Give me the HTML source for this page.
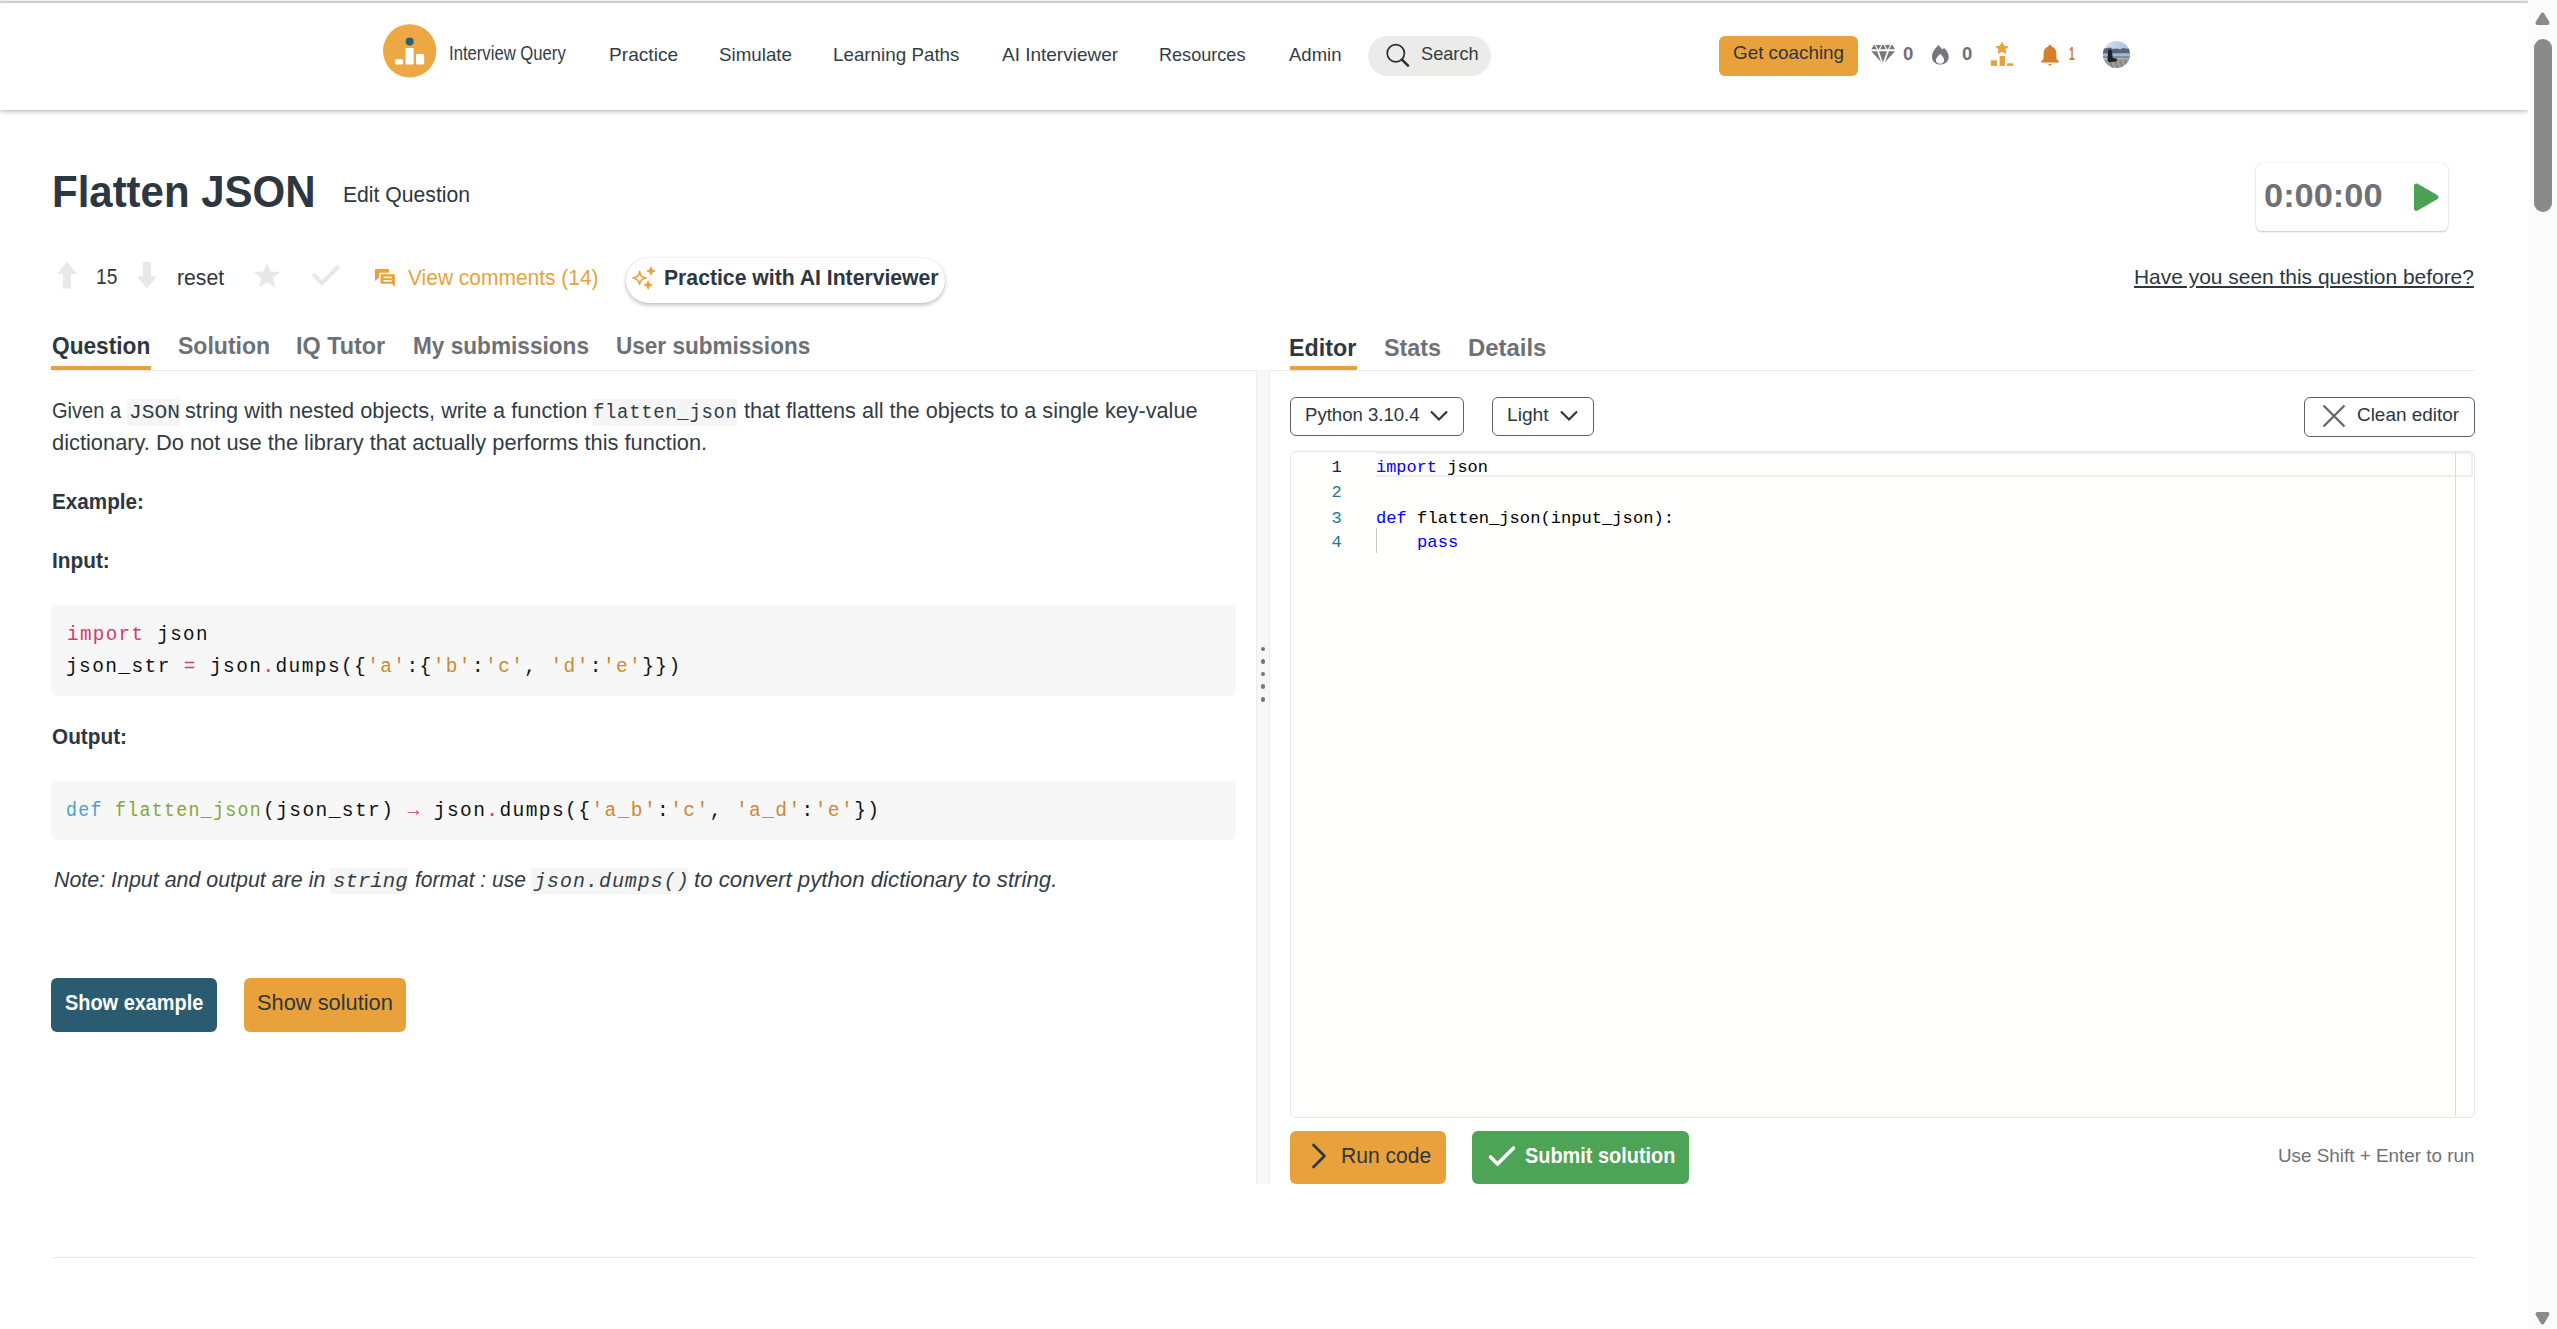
<!DOCTYPE html><html><head><meta charset="utf-8"><style>html,body{margin:0;padding:0;}body{width:2557px;height:1329px;overflow:hidden;position:relative;background:#fff;}.t{position:absolute;white-space:nowrap;transform-origin:0 0;}</style></head><body>
<div style="position:absolute;left:0px;top:0px;width:2528px;height:1px;background:#f4f2f4;border-radius:0px;"></div>
<div style="position:absolute;left:0px;top:1px;width:2528px;height:2px;background:#e1dfe1;border-radius:0px;"></div>
<div style="position:absolute;left:0;top:3px;width:2528px;height:107px;background:#fff;box-shadow:0 1px 5px rgba(0,0,0,0.33);"></div>
<svg style="position:absolute;left:383px;top:24px" width="54" height="54" viewBox="0 0 54 54">
<circle cx="26.7" cy="26.9" r="26.7" fill="#eba845"/>
<circle cx="26.7" cy="17.6" r="4" fill="#2b5f7e"/>
<rect x="12" y="35.2" width="8" height="5.3" rx="1.2" fill="#fff"/>
<rect x="22.6" y="24.1" width="8" height="16.4" rx="1.2" fill="#fff"/>
<rect x="33" y="29.9" width="8.2" height="10.6" rx="1.2" fill="#fff"/>
</svg>
<div style="position:absolute;left:1368px;top:36px;width:123px;height:40px;background:#ebebea;border-radius:20px;"></div>
<svg style="position:absolute;left:1384px;top:41px" width="28" height="28" viewBox="0 0 28 28">
<circle cx="11.8" cy="12.2" r="8.6" fill="none" stroke="#2b2f33" stroke-width="1.7"/>
<line x1="18" y1="18.6" x2="24" y2="24.6" stroke="#2b2f33" stroke-width="2.6" stroke-linecap="round"/>
</svg>
<div style="position:absolute;left:1719px;top:36px;width:139px;height:40px;background:#e9a23b;border-radius:6px;"></div>
<svg style="position:absolute;left:1870px;top:44px" width="27" height="21" viewBox="0 0 27 21">
<path d="M1.3 5.3 L3.9 1 L22.4 1 L25 5.3 Z" fill="#77777c"/>
<path d="M1.3 7.2 L25 7.2 L13 20.2 Z" fill="#77777c"/>
<path d="M5 0.6 L7.6 5.5 M11.9 0.6 L9.4 5.5 M14.1 0.6 L16.6 5.5 M21 0.6 L18.4 5.5" stroke="#fff" stroke-width="1.2"/>
<path d="M7.9 7 L12.6 19.8 M18.1 7 L13.4 19.8" stroke="#fff" stroke-width="1.8"/>
</svg>
<svg style="position:absolute;left:1931px;top:44px" width="20" height="22" viewBox="0 0 20 22">
<path d="M9.3 20.6 C4.5 20.6 1 17.4 1 12.8 C1 8 4.5 4.2 7.6 1 C8.9 2.3 10.2 3.9 11.2 5.5 C11.8 4.9 12.4 4.4 13 4 C15.8 6.2 17.7 9.4 17.7 13 C17.7 17.4 14.2 20.6 9.3 20.6 Z" fill="#76777c"/>
<path d="M9.3 9.8 C11.3 12 13.1 14 13.1 16.3 C13.1 18.5 11.5 19.7 9.3 19.7 C7.1 19.7 4.9 18.5 4.9 16.3 C4.9 14 7.3 12 9.3 9.8 Z" fill="#fff"/>
</svg>
<svg style="position:absolute;left:1990px;top:41px" width="25" height="26" viewBox="0 0 25 26">
<path d="M12 1.3 L13.9 5.2 L18 5.6 L14.9 8.4 L15.8 12.4 L12 10.3 L8.2 12.4 L9.1 8.4 L6 5.6 L10.1 5.2 Z" fill="#e9a23b" stroke="#e9a23b" stroke-width="1" stroke-linejoin="round"/>
<rect x="0.8" y="19.3" width="6.2" height="5.6" fill="#e9a23b"/>
<rect x="9.6" y="15" width="5.4" height="10" fill="#e9a23b"/>
<rect x="16.8" y="22.3" width="6.2" height="2.6" fill="#e9a23b"/>
</svg>
<svg style="position:absolute;left:2040px;top:44px" width="20" height="23" viewBox="0 0 20 23">
<path d="M10 0.8 C11 0.8 11.6 1.6 11.6 2.4 C14.8 3.3 16.4 6 16.4 9.6 L16.4 14.6 L18.8 17.6 C19.2 18.1 18.9 18.6 18.3 18.6 L1.7 18.6 C1.1 18.6 0.8 18.1 1.2 17.6 L3.6 14.6 L3.6 9.6 C3.6 6 5.2 3.3 8.4 2.4 C8.4 1.6 9 0.8 10 0.8 Z" fill="#d67f2a"/>
<path d="M8 20 L12 20 L10 22 Z" fill="#d67f2a"/>
</svg>
<svg style="position:absolute;left:2102px;top:40px" width="29" height="29" viewBox="0 0 29 29">
<defs><clipPath id="av"><circle cx="14.4" cy="14.4" r="13.5"/></clipPath>
<linearGradient id="sky" x1="0" y1="0" x2="1" y2="0.6"><stop offset="0" stop-color="#dfe8f0"/><stop offset="1" stop-color="#8fb5e0"/></linearGradient></defs>
<g clip-path="url(#av)">
<rect x="0" y="0" width="29" height="29" fill="url(#sky)"/>
<path d="M0 9 L5 8 L8 7.5 L11 9 L15 8.5 L18 9.5 L21 8 L25 8.8 L29 8.5 L29 13.5 L0 14 Z" fill="#56657a"/>
<rect x="0" y="13.5" width="29" height="6" fill="#a9b7c4"/>
<rect x="0" y="16" width="29" height="2" fill="#7f8e9c"/>
<path d="M0 20 L29 18.5 L29 29 L0 29 Z" fill="#9d9a94"/>
<path d="M3 22 L6 29 M8 21 L11 29 M13 21 L16 29 M18 20.5 L21 29 M23 20 L26 29" stroke="#6f6c68" stroke-width="0.8"/>
<path d="M6 12 C6 9 8.5 8.3 9.6 10.5 C10.6 12.5 10.2 16 10.8 18 L14.6 18.6 C15.6 19.2 15 21.4 13.6 21.6 L7.6 22.2 C5.8 22.2 5.2 20.6 5.6 18.6 Z" fill="#1d2229"/>
</g></svg>
<div style="position:absolute;left:2528px;top:0px;width:29px;height:1329px;background:#fbfbfb;border-radius:0px;"></div>
<svg style="position:absolute;left:2528px;top:0" width="29" height="1329" viewBox="0 0 29 1329">
<path d="M14.6 12.4 C15.3 12.4 15.8 12.8 16.2 13.4 L21.2 21.8 C21.8 22.8 21.3 25 19.8 25 L9.2 25 C7.8 25 7.2 22.9 7.8 21.8 L12.9 13.4 C13.3 12.8 13.9 12.4 14.6 12.4 Z" fill="#8a8a8a"/>
<rect x="6" y="39" width="18" height="173" rx="9" fill="#8a8a8a"/>
<path d="M14.6 1324.5 C15.3 1324.5 15.8 1324.1 16.2 1323.5 L21.2 1315.1 C21.8 1314.1 21.3 1311.9 19.8 1311.9 L9.2 1311.9 C7.8 1311.9 7.2 1314 7.8 1315.1 L12.9 1323.5 C13.3 1324.1 13.9 1324.5 14.6 1324.5 Z" fill="#8a8a8a"/>
</svg>
<div style="position:absolute;left:2256px;top:163px;width:192px;height:68px;background:#fff;border-radius:6px;box-shadow:0 1px 2px rgba(0,0,0,0.22), 0 0 1px rgba(0,0,0,0.12);"></div>
<svg style="position:absolute;left:2412px;top:182px" width="28" height="31" viewBox="0 0 28 31">
<path d="M2 3.8 C2 1.8 3.8 0.8 5.6 1.8 L25.2 12.9 C27 13.9 27 16.2 25.2 17.2 L5.6 28.6 C3.8 29.6 2 28.6 2 26.6 Z" fill="#4ca154"/>
</svg>
<svg style="position:absolute;left:56px;top:261px" width="22" height="28" viewBox="0 0 22 28">
<path d="M11 1 L21 13 L15 13 L15 27.5 L7 27.5 L7 13 L1 13 Z" fill="#e8e8e8"/>
</svg>
<svg style="position:absolute;left:136px;top:261px" width="22" height="28" viewBox="0 0 22 28">
<path d="M11 27.5 L21 15.5 L15 15.5 L15 1 L7 1 L7 15.5 L1 15.5 Z" fill="#e8e8e8"/>
</svg>
<svg style="position:absolute;left:253px;top:262px" width="28" height="27" viewBox="0 0 28 27">
<path d="M14 0.8 L17.6 9.4 L27 9.9 L19.8 16 L22.2 25.6 L14 20.3 L5.8 25.6 L8.2 16 L1 9.9 L10.4 9.4 Z" fill="#e8e8e8"/>
</svg>
<svg style="position:absolute;left:312px;top:265px" width="28" height="21" viewBox="0 0 28 21">
<path d="M2.5 10.5 L10 18 L25.5 2.5" fill="none" stroke="#e8e8e8" stroke-width="4.2" stroke-linecap="round"/>
</svg>
<svg style="position:absolute;left:374px;top:268px" width="23" height="21" viewBox="0 0 23 21">
<path d="M1 1 H15 V10 H4.5 L1 13 Z" fill="#e9a23b"/>
<path d="M6 5.5 H21.5 V15.5 V20.5 L17.5 16.5 H6 Z" fill="#e9a23b" stroke="#fff" stroke-width="1.3"/>
<line x1="9.5" y1="9.4" x2="18" y2="9.4" stroke="#fff" stroke-width="1.6"/>
<line x1="9.5" y1="12.8" x2="18" y2="12.8" stroke="#fff" stroke-width="1.6"/>
</svg>
<div style="position:absolute;left:626px;top:258px;width:319px;height:45px;background:#fff;border-radius:23px;box-shadow:0 2px 4px rgba(0,0,0,0.25), 0 0 1px rgba(0,0,0,0.15);"></div>
<svg style="position:absolute;left:631px;top:266px" width="26" height="26" viewBox="0 0 26 26">
<path d="M8.6 5.6 Q9.3 11.2 15.2 12 Q9.3 12.8 8.6 18.4 Q7.9 12.8 2 12 Q7.9 11.2 8.6 5.6 Z" fill="none" stroke="#e9a23b" stroke-width="1.6" stroke-linejoin="round"/>
<path d="M20 0.8 Q20.4 4.6 24 5 Q20.4 5.4 20 9.2 Q19.6 5.4 16 5 Q19.6 4.6 20 0.8 Z" fill="#e9a23b" stroke="#e9a23b" stroke-width="1"/>
<path d="M17.2 14.8 Q17.6 18.6 21.2 19 Q17.6 19.4 17.2 23.2 Q16.8 19.4 13.2 19 Q16.8 18.6 17.2 14.8 Z" fill="#e9a23b" stroke="#e9a23b" stroke-width="1"/>
</svg>
<div style="position:absolute;left:51px;top:366px;width:100px;height:4px;background:#e9a23b;border-radius:0px;"></div>
<div style="position:absolute;left:52px;top:370px;width:1204px;height:1px;background:#e9e9e9;border-radius:0px;"></div>
<div style="position:absolute;left:1290px;top:366px;width:67px;height:4px;background:#e9a23b;border-radius:0px;"></div>
<div style="position:absolute;left:1256px;top:370px;width:1219px;height:1px;background:#e9e9e9;border-radius:0px;"></div>
<div style="position:absolute;left:1256px;top:370px;width:12px;height:814px;background:#f7f7f7;border-left:1px solid #ececec;border-right:1px solid #ececec;"></div>
<div style="position:absolute;left:1260.8px;top:646.8px;width:4.4px;height:4.4px;border-radius:50%;background:#777;"></div>
<div style="position:absolute;left:1260.8px;top:659.3px;width:4.4px;height:4.4px;border-radius:50%;background:#777;"></div>
<div style="position:absolute;left:1260.8px;top:671.8px;width:4.4px;height:4.4px;border-radius:50%;background:#777;"></div>
<div style="position:absolute;left:1260.8px;top:684.4px;width:4.4px;height:4.4px;border-radius:50%;background:#777;"></div>
<div style="position:absolute;left:1260.8px;top:697.3px;width:4.4px;height:4.4px;border-radius:50%;background:#777;"></div>
<div style="position:absolute;left:127.2px;top:399px;width:52.5px;height:26.5px;background:#f5f5f5;border-radius:0px;"></div>
<div style="position:absolute;left:591.5px;top:399px;width:145.5px;height:26.5px;background:#f5f5f5;border-radius:0px;"></div>
<div style="position:absolute;left:51px;top:605px;width:1185px;height:91px;background:#f7f7f7;border-radius:6px;"></div>
<div style="position:absolute;left:51px;top:781px;width:1185px;height:58.5px;background:#f7f7f7;border-radius:6px;"></div>
<div style="position:absolute;left:329.6px;top:868px;width:78.9px;height:26.4px;background:#f5f5f5;border-radius:0px;"></div>
<div style="position:absolute;left:530.8px;top:868px;width:157px;height:26.4px;background:#f5f5f5;border-radius:0px;"></div>
<div style="position:absolute;left:51px;top:978px;width:166px;height:53.5px;background:#2b5b70;border-radius:6px;"></div>
<div style="position:absolute;left:244px;top:978px;width:162px;height:53.5px;background:#e9a23b;border-radius:6px;"></div>
<div style="position:absolute;left:1290px;top:397px;width:172px;height:37px;border:1.5px solid #5b6168;border-radius:6px;"></div>
<svg style="position:absolute;left:1428px;top:408px" width="22" height="15" viewBox="0 0 22 15">
<path d="M3 3.5 L11 11.5 L19 3.5" fill="none" stroke="#2d3741" stroke-width="2.2"/>
</svg>
<div style="position:absolute;left:1492px;top:397px;width:100px;height:37px;border:1.5px solid #5b6168;border-radius:6px;"></div>
<svg style="position:absolute;left:1558px;top:408px" width="22" height="15" viewBox="0 0 22 15">
<path d="M3 3.5 L11 11.5 L19 3.5" fill="none" stroke="#2d3741" stroke-width="2.2"/>
</svg>
<div style="position:absolute;left:2304px;top:397px;width:169px;height:38px;border:1.5px solid #5b6168;border-radius:6px;"></div>
<svg style="position:absolute;left:2321px;top:403px" width="26" height="26" viewBox="0 0 26 26">
<path d="M2.5 2.5 L23.5 23.5 M23.5 2.5 L2.5 23.5" fill="none" stroke="#6a6a6a" stroke-width="2.4"/>
</svg>
<div style="position:absolute;left:1290px;top:451px;width:1183px;height:665px;background:#fffffd;border:1px solid #e6e6e6;border-radius:6px;"></div>
<div style="position:absolute;left:1376px;top:452px;width:1097px;height:25px;background:transparent;border-radius:0px;border-top:2px solid #eeeeee;border-bottom:2px solid #eeeeee;border-right:2px solid #eeeeee;box-sizing:border-box;"></div>
<div style="position:absolute;left:2455px;top:452px;width:1px;height:664px;background:#dadada;border-radius:0px;"></div>
<div style="position:absolute;left:1376px;top:528px;width:1px;height:25px;background:#c8c8c8;border-radius:0px;"></div>
<div style="position:absolute;left:1290px;top:1131px;width:156px;height:53px;background:#e9a23b;border-radius:6px;"></div>
<svg style="position:absolute;left:1309px;top:1141px" width="20" height="30" viewBox="0 0 20 30">
<path d="M4.5 4 L15.5 15 L4.5 26" fill="none" stroke="#2d3741" stroke-width="2.6" stroke-linecap="round" stroke-linejoin="round"/>
</svg>
<div style="position:absolute;left:1472px;top:1131px;width:217px;height:53px;background:#4da356;border-radius:6px;"></div>
<svg style="position:absolute;left:1487px;top:1144px" width="31" height="25" viewBox="0 0 31 25">
<path d="M3.5 13 L10.5 20 L26.5 4" fill="none" stroke="#fff" stroke-width="3.6" stroke-linecap="round" stroke-linejoin="round"/>
</svg>
<div style="position:absolute;left:52px;top:1257px;width:2423px;height:1px;background:#e6e6e6;border-radius:0px;"></div>
<div class="t" id="t0" style="left:449.17px;top:43.40px;font-family:'Liberation Sans', sans-serif;font-size:20px;line-height:20px;font-weight:400;color:#333d47;transform:scaleX(0.8336);">Interview Query</div>
<div class="t" id="t1" style="left:609.19px;top:46.25px;font-family:'Liberation Sans', sans-serif;font-size:18.5px;line-height:18.5px;font-weight:400;color:#333d47;transform:scaleX(1.0348);">Practice</div>
<div class="t" id="t2" style="left:719.00px;top:46.25px;font-family:'Liberation Sans', sans-serif;font-size:18.5px;line-height:18.5px;font-weight:400;color:#333d47;transform:scaleX(1.0139);">Simulate</div>
<div class="t" id="t3" style="left:832.98px;top:46.25px;font-family:'Liberation Sans', sans-serif;font-size:18.5px;line-height:18.5px;font-weight:400;color:#333d47;transform:scaleX(1.0161);">Learning Paths</div>
<div class="t" id="t4" style="left:1002.03px;top:46.25px;font-family:'Liberation Sans', sans-serif;font-size:18.5px;line-height:18.5px;font-weight:400;color:#333d47;transform:scaleX(1.0261);">AI Interviewer</div>
<div class="t" id="t5" style="left:1159.02px;top:46.25px;font-family:'Liberation Sans', sans-serif;font-size:18.5px;line-height:18.5px;font-weight:400;color:#333d47;transform:scaleX(0.9773);">Resources</div>
<div class="t" id="t6" style="left:1289.00px;top:46.25px;font-family:'Liberation Sans', sans-serif;font-size:18.5px;line-height:18.5px;font-weight:400;color:#333d47;transform:scaleX(1.0000);">Admin</div>
<div class="t" id="t7" style="left:1421.00px;top:45.25px;font-family:'Liberation Sans', sans-serif;font-size:18.5px;line-height:18.5px;font-weight:400;color:#333d47;transform:scaleX(0.9828);">Search</div>
<div class="t" id="t8" style="left:1732.99px;top:44.05px;font-family:'Liberation Sans', sans-serif;font-size:18.5px;line-height:18.5px;font-weight:400;color:#2d3741;transform:scaleX(1.0185);">Get coaching</div>
<div class="t" id="t9" style="left:1903.00px;top:45.25px;font-family:'Liberation Sans', sans-serif;font-size:18.5px;line-height:18.5px;font-weight:700;color:#6f6f74;transform:scaleX(1.0000);">0</div>
<div class="t" id="t10" style="left:1962.00px;top:45.25px;font-family:'Liberation Sans', sans-serif;font-size:18.5px;line-height:18.5px;font-weight:700;color:#6f6f74;transform:scaleX(1.0000);">0</div>
<div class="t" id="t11" style="left:2069.00px;top:45.25px;font-family:'Liberation Sans', sans-serif;font-size:18.5px;line-height:18.5px;font-weight:700;color:#d07b2c;transform:scaleX(0.5500);">1</div>
<div class="t" id="t12" style="left:51.90px;top:171.20px;font-family:'Liberation Sans', sans-serif;font-size:43.6px;line-height:43.6px;font-weight:700;color:#2d3741;transform:scaleX(0.9628);">Flatten JSON</div>
<div class="t" id="t13" style="left:343.04px;top:184.10px;font-family:'Liberation Sans', sans-serif;font-size:22px;line-height:22px;font-weight:400;color:#2d3741;transform:scaleX(0.9615);">Edit Question</div>
<div class="t" id="t14" style="left:2263.99px;top:179.25px;font-family:'Liberation Sans', sans-serif;font-size:33.9px;line-height:33.9px;font-weight:700;color:#707075;transform:scaleX(1.0148);">0:00:00</div>
<div class="t" id="t15" style="left:96.10px;top:266.30px;font-family:'Liberation Sans', sans-serif;font-size:21.2px;line-height:21.2px;font-weight:400;color:#2d3741;transform:scaleX(0.9045);">15</div>
<div class="t" id="t16" style="left:176.61px;top:267.65px;font-family:'Liberation Sans', sans-serif;font-size:21.5px;line-height:21.5px;font-weight:400;color:#2d3741;transform:scaleX(0.9851);">reset</div>
<div class="t" id="t17" style="left:408.38px;top:268.25px;font-family:'Liberation Sans', sans-serif;font-size:21.5px;line-height:21.5px;font-weight:400;color:#e9a23b;transform:scaleX(0.9744);">View comments (14)</div>
<div class="t" id="t18" style="left:664.02px;top:266.90px;font-family:'Liberation Sans', sans-serif;font-size:22px;line-height:22px;font-weight:700;color:#2d3741;transform:scaleX(0.9625);">Practice with AI Interviewer</div>
<div class="t" id="t19" style="left:2134.00px;top:266.00px;font-family:'Liberation Sans', sans-serif;font-size:21px;line-height:21px;font-weight:400;color:#2d3741;text-decoration:underline;text-decoration-thickness:2px;text-underline-offset:2px;transform:scaleX(0.9971);">Have you seen this question before?</div>
<div class="t" id="t20" style="left:52.00px;top:334.35px;font-family:'Liberation Sans', sans-serif;font-size:24.3px;line-height:24.3px;font-weight:700;color:#2d3741;transform:scaleX(0.9333);">Question</div>
<div class="t" id="t21" style="left:178.00px;top:334.35px;font-family:'Liberation Sans', sans-serif;font-size:24.3px;line-height:24.3px;font-weight:700;color:#6d7177;transform:scaleX(0.9479);">Solution</div>
<div class="t" id="t22" style="left:296.02px;top:334.35px;font-family:'Liberation Sans', sans-serif;font-size:24.3px;line-height:24.3px;font-weight:700;color:#6d7177;transform:scaleX(0.9624);">IQ Tutor</div>
<div class="t" id="t23" style="left:413.07px;top:334.35px;font-family:'Liberation Sans', sans-serif;font-size:24.3px;line-height:24.3px;font-weight:700;color:#6d7177;transform:scaleX(0.9309);">My submissions</div>
<div class="t" id="t24" style="left:616.07px;top:334.35px;font-family:'Liberation Sans', sans-serif;font-size:24.3px;line-height:24.3px;font-weight:700;color:#6d7177;transform:scaleX(0.9279);">User submissions</div>
<div class="t" id="t25" style="left:1289.04px;top:335.75px;font-family:'Liberation Sans', sans-serif;font-size:24.3px;line-height:24.3px;font-weight:700;color:#2d3741;transform:scaleX(0.9571);">Editor</div>
<div class="t" id="t26" style="left:1384.00px;top:335.75px;font-family:'Liberation Sans', sans-serif;font-size:24.3px;line-height:24.3px;font-weight:700;color:#6d7177;transform:scaleX(0.9610);">Stats</div>
<div class="t" id="t27" style="left:1467.62px;top:335.75px;font-family:'Liberation Sans', sans-serif;font-size:24.3px;line-height:24.3px;font-weight:700;color:#6d7177;transform:scaleX(0.9833);">Details</div>
<div class="t" id="t28" style="left:52.04px;top:400.40px;font-family:'Liberation Sans', sans-serif;font-size:21.8px;line-height:21.8px;font-weight:400;color:#333c45;transform:scaleX(0.9213);">Given a</div>
<div class="t" id="t29" style="left:128.54px;top:404.05px;font-family:'Liberation Mono', monospace;font-size:19.5px;line-height:19.5px;font-weight:400;color:#333c45;transform:scaleX(1.0911);">JSON</div>
<div class="t" id="t30" style="left:185.00px;top:400.40px;font-family:'Liberation Sans', sans-serif;font-size:21.8px;line-height:21.8px;font-weight:400;color:#333c45;transform:scaleX(0.9973);">string with nested objects, write a function</div>
<div class="t" id="t31" style="left:592.61px;top:404.05px;font-family:'Liberation Mono', monospace;font-size:19.5px;line-height:19.5px;font-weight:400;color:#333c45;letter-spacing:0.7px;transform:scaleX(0.9714);">flatten_json</div>
<div class="t" id="t32" style="left:743.59px;top:400.40px;font-family:'Liberation Sans', sans-serif;font-size:21.8px;line-height:21.8px;font-weight:400;color:#333c45;transform:scaleX(0.9928);">that flattens all the objects to a single key-value</div>
<div class="t" id="t33" style="left:52.00px;top:432.20px;font-family:'Liberation Sans', sans-serif;font-size:21.8px;line-height:21.8px;font-weight:400;color:#333c45;transform:scaleX(1.0020);">dictionary. Do not use the library that actually performs this function.</div>
<div class="t" id="t34" style="left:52.03px;top:490.60px;font-family:'Liberation Sans', sans-serif;font-size:21.8px;line-height:21.8px;font-weight:700;color:#2d3741;transform:scaleX(0.9484);">Example:</div>
<div class="t" id="t35" style="left:52.02px;top:549.60px;font-family:'Liberation Sans', sans-serif;font-size:21.8px;line-height:21.8px;font-weight:700;color:#2d3741;transform:scaleX(0.9542);">Input:</div>
<div class="t" id="t36" style="left:67.40px;top:626.05px;font-family:'Liberation Mono', monospace;font-size:19.5px;line-height:19.5px;font-weight:400;color:#111;letter-spacing:1.4px;transform:scaleX(0.9845);"><span style="color:#d63a6a">import</span> json</div>
<div class="t" id="t37" style="left:66.40px;top:657.65px;font-family:'Liberation Mono', monospace;font-size:19.5px;line-height:19.5px;font-weight:400;color:#111;letter-spacing:1.4px;transform:scaleX(0.9993);">json_str <span style='color:#d63a6a'>=</span> json<span style='color:#d63a6a'>.</span>dumps({<span style='color:#c98b34'>'a'</span>:{<span style='color:#c98b34'>'b'</span>:<span style='color:#c98b34'>'c'</span>, <span style='color:#c98b34'>'d'</span>:<span style='color:#c98b34'>'e'</span>}})</div>
<div class="t" id="t38" style="left:52.00px;top:726.20px;font-family:'Liberation Sans', sans-serif;font-size:21.8px;line-height:21.8px;font-weight:700;color:#2d3741;transform:scaleX(0.9532);">Output:</div>
<div class="t" id="t39" style="left:65.84px;top:802.05px;font-family:'Liberation Mono', monospace;font-size:19.5px;line-height:19.5px;font-weight:400;color:#111;letter-spacing:1.4px;transform:scaleX(0.9353);"><span style='color:#4f9fc4'>def</span> <span style='color:#7ea83c'>flatten_json</span></div>
<div class="t" id="t40" style="left:262.59px;top:802.05px;font-family:'Liberation Mono', monospace;font-size:19.5px;line-height:19.5px;font-weight:400;color:#111;letter-spacing:1.4px;transform:scaleX(1.0025);">(json_str) <span style='color:#d63a6a'>&#8594;</span> json<span style='color:#d63a6a'>.</span>dumps({<span style='color:#c98b34'>'a_b'</span>:<span style='color:#c98b34'>'c'</span>, <span style='color:#c98b34'>'a_d'</span>:<span style='color:#c98b34'>'e'</span>})</div>
<div class="t" id="t41" style="left:54.00px;top:869.00px;font-family:'Liberation Sans', sans-serif;font-size:21.8px;line-height:21.8px;font-weight:400;color:#333c45;font-style:italic;transform:scaleX(0.9819);">Note: Input and output are in</div>
<div class="t" id="t42" style="left:333.00px;top:872.65px;font-family:'Liberation Mono', monospace;font-size:19.5px;line-height:19.5px;font-weight:400;color:#333c45;font-style:italic;transform:scaleX(1.0643);">string</div>
<div class="t" id="t43" style="left:415.21px;top:869.00px;font-family:'Liberation Sans', sans-serif;font-size:21.8px;line-height:21.8px;font-weight:400;color:#333c45;font-style:italic;transform:scaleX(0.9635);">format : use</div>
<div class="t" id="t44" style="left:533.83px;top:872.65px;font-family:'Liberation Mono', monospace;font-size:19.5px;line-height:19.5px;font-weight:400;color:#333c45;font-style:italic;letter-spacing:1px;transform:scaleX(1.0220);">json.dumps()</div>
<div class="t" id="t45" style="left:694.38px;top:869.00px;font-family:'Liberation Sans', sans-serif;font-size:21.8px;line-height:21.8px;font-weight:400;color:#333c45;font-style:italic;transform:scaleX(1.0201);">to convert python dictionary to string.</div>
<div class="t" id="t46" style="left:65.23px;top:993.05px;font-family:'Liberation Sans', sans-serif;font-size:21.5px;line-height:21.5px;font-weight:700;color:#fff;transform:scaleX(0.9262);">Show example</div>
<div class="t" id="t47" style="left:256.98px;top:993.05px;font-family:'Liberation Sans', sans-serif;font-size:21.5px;line-height:21.5px;font-weight:400;color:#2d3741;transform:scaleX(1.0152);">Show solution</div>
<div class="t" id="t48" style="left:1304.80px;top:406.25px;font-family:'Liberation Sans', sans-serif;font-size:18.5px;line-height:18.5px;font-weight:400;color:#2d3741;transform:scaleX(1.0035);">Python 3.10.4</div>
<div class="t" id="t49" style="left:1506.98px;top:406.25px;font-family:'Liberation Sans', sans-serif;font-size:18.5px;line-height:18.5px;font-weight:400;color:#2d3741;transform:scaleX(1.0375);">Light</div>
<div class="t" id="t50" style="left:2357.39px;top:406.25px;font-family:'Liberation Sans', sans-serif;font-size:18.5px;line-height:18.5px;font-weight:400;color:#2d3741;transform:scaleX(1.0230);">Clean editor</div>
<div class="t" id="t51" style="left:1331.40px;top:458.60px;font-family:'Liberation Mono', monospace;font-size:17px;line-height:17px;font-weight:400;color:#0b216f;transform:scaleX(1.0000);">1</div>
<div class="t" id="t52" style="left:1331.40px;top:484.00px;font-family:'Liberation Mono', monospace;font-size:17px;line-height:17px;font-weight:400;color:#237893;transform:scaleX(1.0000);">2</div>
<div class="t" id="t53" style="left:1331.40px;top:509.60px;font-family:'Liberation Mono', monospace;font-size:17px;line-height:17px;font-weight:400;color:#237893;transform:scaleX(1.0000);">3</div>
<div class="t" id="t54" style="left:1331.40px;top:534.20px;font-family:'Liberation Mono', monospace;font-size:17px;line-height:17px;font-weight:400;color:#237893;transform:scaleX(1.0000);">4</div>
<div class="t" id="t55" style="left:1376.40px;top:458.60px;font-family:'Liberation Mono', monospace;font-size:17px;line-height:17px;font-weight:400;color:#000;transform:scaleX(0.9973);"><span style='color:#0000ff'>import</span> json</div>
<div class="t" id="t56" style="left:1376.39px;top:509.60px;font-family:'Liberation Mono', monospace;font-size:17px;line-height:17px;font-weight:400;color:#000;transform:scaleX(1.0072);"><span style='color:#0000ff'>def</span> flatten_json(input_json):</div>
<div class="t" id="t57" style="left:1416.99px;top:534.20px;font-family:'Liberation Mono', monospace;font-size:17px;line-height:17px;font-weight:400;color:#0000ff;transform:scaleX(1.0128);">pass</div>
<div class="t" id="t58" style="left:1341.44px;top:1146.25px;font-family:'Liberation Sans', sans-serif;font-size:21.5px;line-height:21.5px;font-weight:400;color:#2d3741;transform:scaleX(0.9800);">Run code</div>
<div class="t" id="t59" style="left:1525.00px;top:1146.25px;font-family:'Liberation Sans', sans-serif;font-size:21.5px;line-height:21.5px;font-weight:700;color:#fff;transform:scaleX(0.9259);">Submit solution</div>
<div class="t" id="t60" style="left:2278.01px;top:1146.00px;font-family:'Liberation Sans', sans-serif;font-size:19px;line-height:19px;font-weight:400;color:#6e7177;transform:scaleX(0.9924);">Use Shift + Enter to run</div>
</body></html>
